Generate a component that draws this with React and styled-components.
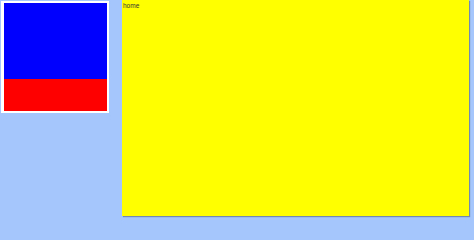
import React from "react";
import styled, { createGlobalStyle } from "styled-components";

const GlobalStyle = createGlobalStyle`
  html, body {
    margin: 0;
    padding: 0;
    background: #a4c6fc;
    font-family: "Liberation Sans", Arial, sans-serif;
  }
`;

const Page = styled.div`
  display: flex;
  align-items: flex-start;
  width: 474px;
  height: 220px;
  box-sizing: border-box;
`;

const Sidebar = styled.aside`
  width: 108px;
  margin: 1px 0 0 1px;
`;

const Swatch = styled.div`
  display: flex;
  flex-direction: column;
  border-style: solid;
  border-color: #fff;
  border-width: 2px 2px 2px 3px;
`;

const Band = styled.div`
  height: ${(p) => p.h}px;
  background: ${(p) => p.color};
`;

const Main = styled.main`
  flex: 1;
  height: 216px;
  margin: 0 5px 0 13px;
  padding: 2px 0 0 1px;
  box-sizing: border-box;
  background: #ffff00;
  box-shadow: 1px 1px 1px rgba(0, 0, 0, 0.3);
  font-size: 6.5px;
  color: #333;
`;

const App = () => {
  return (
    <>
      <GlobalStyle />
      <Page>
        <Sidebar>
          <Swatch>
            <Band h={76} color="#0000ff" />
            <Band h={32} color="#ff0000" />
          </Swatch>
        </Sidebar>
        <Main>home</Main>
      </Page>
    </>
  );
};

export default App;
